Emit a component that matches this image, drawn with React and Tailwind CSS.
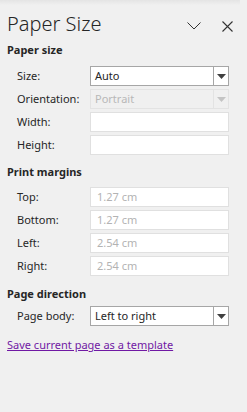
import { useState } from 'react';

const font = { fontFamily: '"Segoe UI", "Noto Sans", "Open Sans", sans-serif' };

function Caret({ disabled }) {
  return (
    <svg width="9" height="5" viewBox="0 0 9 5">
      <path d="M0 0 H9 L4.5 5 Z" fill={disabled ? '#c4c4c4' : '#404040'} />
    </svg>
  );
}

function Select({ value, disabled }) {
  return (
    <div
      className={
        'flex h-[20px] w-[139px] items-stretch border ' +
        (disabled ? 'border-[#e3e3e3] bg-[#f0f0f0]' : 'border-[#a6a6a6] bg-white')
      }
    >
      <div className={'flex flex-1 items-center pl-[4px] text-[11px] ' + (disabled ? 'text-[#b8b8b8]' : 'text-[#262626]')}>
        {value}
      </div>
      <div className={'flex w-[15px] items-center justify-center border-l ' + (disabled ? 'border-[#e3e3e3]' : 'border-[#a6a6a6]')}>
        <Caret disabled={disabled} />
      </div>
    </div>
  );
}

function TextBox({ placeholder }) {
  return (
    <div className="flex h-[20px] w-[139px] items-center border border-[#e0e0e0] bg-white pl-[6px] text-[11px] text-[#b3b3b3]">
      {placeholder}
    </div>
  );
}

function Row({ label, children }) {
  return (
    <div className="flex items-center">
      <div className="w-[73px] text-[11px] text-[#262626]">{label}</div>
      {children}
    </div>
  );
}

export default function App() {
  const [size] = useState('Auto');

  return (
    <div className="relative h-[412px] w-[247px] overflow-hidden bg-[#f0f0f0]" style={font}>
      <div className="absolute left-0 top-0 h-[5px] w-[240px] bg-gradient-to-b from-[#e4e4e4] to-[#f0f0f0]" />

      <div className="flex items-center justify-between pl-[7px] pr-[14px] pt-[10px]">
        <h1 className="text-[20px] font-light leading-[28px] text-[#262626]">Paper Size</h1>
        <div className="mt-[4px] flex items-center gap-[21px]">
          <svg width="14" height="8" viewBox="0 0 14 8">
            <path d="M0.5 0.5 L7 7 L13.5 0.5" fill="none" stroke="#333" strokeWidth="1" />
          </svg>
          <svg width="11" height="11" viewBox="0 0 11 11">
            <path d="M0.5 0.5 L10.5 10.5 M10.5 0.5 L0.5 10.5" fill="none" stroke="#333" strokeWidth="1.1" />
          </svg>
        </div>
      </div>

      <div className="pl-[7px]">
        <h2 className="mt-[4px] text-[11px] font-bold leading-[16px] text-[#262626]">Paper size</h2>
        <div className="mt-[8px] flex flex-col gap-[3px] pl-[10px]">
          <Row label="Size:"><Select value={size} /></Row>
          <Row label="Orientation:"><Select value="Portrait" disabled /></Row>
          <Row label="Width:"><TextBox /></Row>
          <Row label="Height:"><TextBox /></Row>
        </div>

        <h2 className="mt-[9px] text-[11px] font-bold leading-[16px] text-[#262626]">Print margins</h2>
        <div className="mt-[7px] flex flex-col gap-[3px] pl-[10px]">
          <Row label="Top:"><TextBox placeholder="1.27 cm" /></Row>
          <Row label="Bottom:"><TextBox placeholder="1.27 cm" /></Row>
          <Row label="Left:"><TextBox placeholder="2.54 cm" /></Row>
          <Row label="Right:"><TextBox placeholder="2.54 cm" /></Row>
        </div>

        <h2 className="mt-[10px] text-[11px] font-bold leading-[16px] text-[#262626]">Page direction</h2>
        <div className="mt-[4px] flex flex-col pl-[10px]">
          <Row label="Page body:"><Select value="Left to right" /></Row>
        </div>

        <a href="#" className="mt-[11px] block text-[11px] leading-[16px] text-[#7019a4] underline">
          Save current page as a template
        </a>
      </div>
    </div>
  );
}
